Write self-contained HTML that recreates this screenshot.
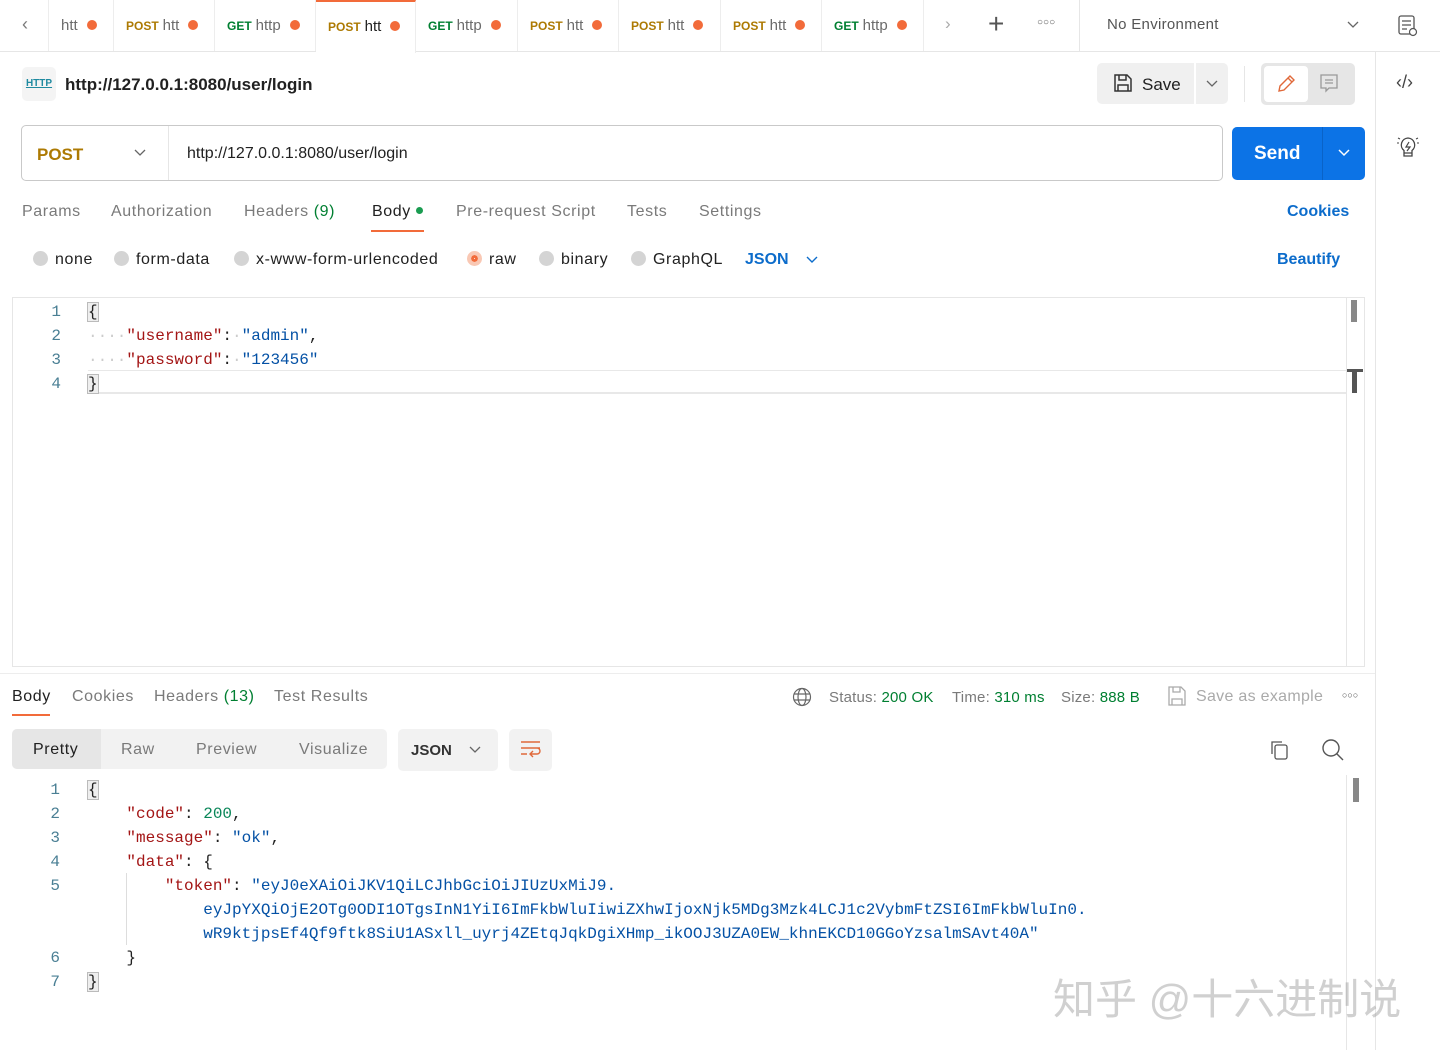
<!DOCTYPE html>
<html><head><meta charset="utf-8"><style>
*{box-sizing:border-box;margin:0;padding:0}
body{width:1440px;height:1050px;background:#fff;font-family:"Liberation Sans",sans-serif;color:#212121;position:relative;overflow:hidden;font-size:16px}
.a{position:absolute;white-space:nowrap}
.g{color:#7a7a7a}
.ls{letter-spacing:0.6px}
.mono{font-family:"Liberation Mono",monospace;font-size:16px}
.tab{position:absolute;top:0;height:51px;border-right:1px solid #ededed;font-size:15px;line-height:51px;padding-left:12px;color:#6b6b6b}
.tab b{font-size:12px;font-weight:bold;margin-right:4px}
.po{color:#ad7a03}.ge{color:#007f31}
.dot{display:inline-block;width:10px;height:10px;border-radius:50%;background:#f26b3a;margin-left:9px;vertical-align:0px}
.ln{color:#4a7f94;text-align:right;width:20px}
.k{color:#a31515}.s{color:#0451a5}.n{color:#098658}
.radio{display:inline-block;width:15px;height:15px;border-radius:50%;background:#d4d4d4;vertical-align:-2px;margin-right:7px}
</style></head><body>
<div class="a" style="left:0;top:0;width:1440px;height:52px;border-bottom:1px solid #e6e6e6"></div>
<div class="a g" style="left:22px;top:14px;font-size:18px">‹</div>
<div class="tab" style="left:48px;width:66px;border-left:1px solid #ededed">htt<span class="dot"></span></div>
<div class="tab" style="left:114px;width:101px"><b class="po">POST</b>htt<span class="dot"></span></div>
<div class="tab" style="left:215px;width:101px"><b class="ge">GET</b>http<span class="dot"></span></div>
<div class="tab" style="left:316px;width:100px;border-top:2px solid #f26b3a;line-height:49px;height:53px;background:#fff;color:#212121"><b class="po">POST</b>htt<span class="dot"></span></div>
<div class="tab" style="left:416px;width:102px"><b class="ge">GET</b>http<span class="dot"></span></div>
<div class="tab" style="left:518px;width:101px"><b class="po">POST</b>htt<span class="dot"></span></div>
<div class="tab" style="left:619px;width:102px"><b class="po">POST</b>htt<span class="dot"></span></div>
<div class="tab" style="left:721px;width:101px"><b class="po">POST</b>htt<span class="dot"></span></div>
<div class="tab" style="left:822px;width:102px"><b class="ge">GET</b>http<span class="dot"></span></div>
<div class="a g" style="left:945px;top:14px;font-size:17px;color:#aaa">›</div>
<div class="a" style="left:988px;top:8px;font-size:28px;font-weight:200;color:#555">+</div>
<div class="a" style="left:1037px;top:17px;font-size:10px;color:#555">○○○</div>
<div class="a" style="left:1079px;top:0;width:1px;height:51px;background:#e6e6e6"></div>
<div class="a" style="left:1107px;top:16px;font-size:15px;color:#555;letter-spacing:0.3px">No Environment</div>
<svg class="a" style="left:1346px;top:18px" width="14" height="14"><path d="M2 4l5 5 5-5" fill="none" stroke="#666" stroke-width="1.3"/></svg>
<svg class="a" style="left:1397px;top:14px" width="22" height="24"><rect x="2" y="2" width="15" height="18" rx="2" fill="none" stroke="#555" stroke-width="1.3"/><path d="M5 7h9M5 11h9M5 15h5" stroke="#555" stroke-width="1.2"/><circle cx="16" cy="18" r="3.5" fill="#fff" stroke="#555" stroke-width="1.2"/></svg>
<div class="a" style="left:1375px;top:52px;width:1px;height:998px;background:#e6e6e6"></div>
<div class="a" style="left:1396px;top:72px;font-size:18px;color:#444">‹/›</div>
<svg class="a" style="left:1396px;top:135px" width="24" height="26"><path d="M8 18v3h8v-3M12 3a7 7 0 0 0-4 12.5V18h8v-2.5A7 7 0 0 0 12 3z" fill="none" stroke="#444" stroke-width="1.3"/><path d="M13 7l-3 5h4l-3 4" fill="none" stroke="#444" stroke-width="1.2"/><path d="M1 8h2M21 8h2M2 3l2 1M22 3l-2 1" stroke="#444"/></svg>
<div class="a" style="left:22px;top:67px;width:34px;height:34px;border-radius:5px;background:#f4f4f4;color:#1f8aa0;font-size:10px;text-align:center;line-height:34px;font-weight:bold;text-decoration:underline">HTTP</div>
<div class="a" style="left:65px;top:75px;font-size:17px;font-weight:bold;color:#212121">http://127.0.0.1:8080/user/login</div>
<div class="a" style="left:1097px;top:63px;width:97px;height:41px;background:#f0f0f0;border-radius:5px 0 0 5px"></div>
<svg class="a" style="left:1113px;top:73px" width="20" height="20"><path d="M2 2h12l4 4v12H2z" fill="none" stroke="#333" stroke-width="1.5"/><path d="M6 2v5h7V2M5 18v-6h10v6" fill="none" stroke="#333" stroke-width="1.5"/></svg>
<div class="a" style="left:1142px;top:75px;font-size:17px">Save</div>
<div class="a" style="left:1196px;top:63px;width:32px;height:41px;background:#f0f0f0;border-radius:0 5px 5px 0"></div>
<svg class="a" style="left:1205px;top:77px" width="14" height="14"><path d="M2 4l5 5 5-5" fill="none" stroke="#666" stroke-width="1.3"/></svg>
<div class="a" style="left:1244px;top:66px;width:1px;height:36px;background:#e6e6e6"></div>
<div class="a" style="left:1261px;top:63px;width:94px;height:42px;background:#e6e6e6;border-radius:5px"></div>
<div class="a" style="left:1264px;top:66px;width:44px;height:36px;background:#fff;border-radius:4px"></div>
<svg class="a" style="left:1275px;top:73px" width="22" height="22"><path d="M4 18l1-5L15 3l4 4L9 17z M13 5l4 4" fill="none" stroke="#e0693a" stroke-width="1.4"/></svg>
<svg class="a" style="left:1319px;top:73px" width="22" height="22"><path d="M2 2h16v13H10l-3 3v-3H2z M6 7h8M6 10h8" fill="none" stroke="#999" stroke-width="1.3"/></svg>
<div class="a" style="left:21px;top:125px;width:1202px;height:56px;border:1px solid #c9c9c9;border-radius:5px"></div>
<div class="a" style="left:168px;top:126px;width:1px;height:54px;background:#e6e6e6"></div>
<div class="a" style="left:37px;top:145px;font-size:17px;font-weight:bold;color:#ad7a03">POST</div>
<svg class="a" style="left:133px;top:146px" width="14" height="14"><path d="M2 4l5 5 5-5" fill="none" stroke="#666" stroke-width="1.3"/></svg>
<div class="a" style="left:187px;top:145px;font-size:16px">http://127.0.0.1:8080/user/login</div>
<div class="a" style="left:1232px;top:127px;width:133px;height:53px;background:#0c73e6;border-radius:5px"></div>
<div class="a" style="left:1322px;top:127px;width:1px;height:53px;background:#0a63c8"></div>
<div class="a" style="left:1254px;top:143px;font-size:19px;font-weight:bold;color:#fff">Send</div>
<svg class="a" style="left:1337px;top:146px" width="14" height="14"><path d="M2 4l5 5 5-5" fill="none" stroke="#fff" stroke-width="1.5"/></svg>
<div class="a g ls" style="left:22px;top:203px">Params</div>
<div class="a g ls" style="left:111px;top:203px">Authorization</div>
<div class="a g ls" style="left:244px;top:203px">Headers <span style="color:#007f31">(9)</span></div>
<div class="a ls" style="left:372px;top:203px">Body <span style="display:inline-block;width:7px;height:7px;border-radius:50%;background:#1a9c51;vertical-align:2px"></span></div>
<div class="a" style="left:371px;top:230px;width:53px;height:2px;background:#f26b3a"></div>
<div class="a g ls" style="left:456px;top:203px">Pre-request Script</div>
<div class="a g ls" style="left:627px;top:203px">Tests</div>
<div class="a g ls" style="left:699px;top:203px">Settings</div>
<div class="a" style="left:1287px;top:203px;font-weight:bold;color:#0c6ccb">Cookies</div>
<div class="a ls" style="left:33px;top:251px"><span class="radio"></span>none</div>
<div class="a ls" style="left:114px;top:251px"><span class="radio"></span>form-data</div>
<div class="a ls" style="left:234px;top:251px"><span class="radio"></span>x-www-form-urlencoded</div>
<div class="a ls" style="left:467px;top:251px"><span class="radio" style="background:#fff;border:4px solid #f9c8b4;box-shadow:inset 0 0 0 3px #f26b3a"></span>raw</div>
<div class="a ls" style="left:539px;top:251px"><span class="radio"></span>binary</div>
<div class="a ls" style="left:631px;top:251px"><span class="radio"></span>GraphQL</div>
<div class="a" style="left:745px;top:251px;font-weight:bold;color:#0c6ccb">JSON</div>
<svg class="a" style="left:805px;top:253px" width="14" height="14"><path d="M2 4l5 5 5-5" fill="none" stroke="#0c6ccb" stroke-width="1.4"/></svg>
<div class="a" style="left:1277px;top:251px;font-weight:bold;color:#0c6ccb">Beautify</div>
<div class="a" style="left:12px;top:297px;width:1353px;height:370px;border:1px solid #e6e6e6"></div>
<div class="a" style="left:88px;top:370px;width:1258px;height:24px;border-top:1px solid #e8e8e8;border-bottom:2px solid #e8e8e8"></div>
<div class="a" style="left:1346px;top:298px;width:1px;height:368px;background:#e6e6e6"></div>
<div class="a" style="left:1351px;top:300px;width:6px;height:22px;background:#888"></div>
<div class="a" style="left:1347px;top:369px;width:16px;height:3px;background:#555"></div>
<div class="a" style="left:1352px;top:371px;width:5px;height:22px;background:#555"></div>
<div class="a mono" style="left:0;top:300px;line-height:24px">
<div style="position:absolute;left:41px;top:0" class="ln">1<br>2<br>3<br>4</div>
<div style="position:absolute;left:88px;top:0"><span style="outline:1px solid #bbb;background:#eee">{</span><br><span style="color:#ccc">····</span><span class="k">"username"</span>:<span style="color:#ccc">·</span><span class="s">"admin"</span>,<br><span style="color:#ccc">····</span><span class="k">"password"</span>:<span style="color:#ccc">·</span><span class="s">"123456"</span><br><span style="outline:1px solid #bbb;background:#eee">}</span></div>
</div>
<div class="a" style="left:0;top:673px;width:1375px;height:1px;background:#ededed"></div>
<div class="a ls" style="left:12px;top:688px">Body</div>
<div class="a" style="left:12px;top:714px;width:38px;height:2px;background:#f26b3a"></div>
<div class="a g ls" style="left:72px;top:688px">Cookies</div>
<div class="a g ls" style="left:154px;top:688px">Headers <span style="color:#007f31">(13)</span></div>
<div class="a g ls" style="left:274px;top:688px">Test Results</div>
<svg class="a" style="left:792px;top:687px" width="20" height="20"><circle cx="10" cy="10" r="8.5" fill="none" stroke="#666" stroke-width="1.2"/><ellipse cx="10" cy="10" rx="4" ry="8.5" fill="none" stroke="#666" stroke-width="1.2"/><path d="M2 7h16M2 13h16" stroke="#666" stroke-width="1.2"/></svg>
<div class="a g" style="left:829px;top:689px;font-size:15px;letter-spacing:0.2px">Status: <span style="color:#007f31">200 OK</span></div>
<div class="a g" style="left:952px;top:689px;font-size:15px;letter-spacing:0.2px">Time: <span style="color:#007f31">310 ms</span></div>
<div class="a g" style="left:1061px;top:689px;font-size:15px;letter-spacing:0.2px">Size: <span style="color:#007f31">888 B</span></div>
<svg class="a" style="left:1167px;top:685px" width="20" height="22"><path d="M2 2h12l4 4v14H2z M6 2v5h7V2M5 20v-6h10v6" fill="none" stroke="#aaa" stroke-width="1.3"/></svg>
<div class="a" style="left:1196px;top:688px;color:#aaa;letter-spacing:0.3px">Save as example</div>
<div class="a" style="left:1342px;top:690px;font-size:9px;color:#444">○○○</div>
<div class="a" style="left:12px;top:729px;width:375px;height:40px;background:#f2f2f2;border-radius:5px"></div>
<div class="a" style="left:12px;top:729px;width:89px;height:40px;background:#e6e6e6;border-radius:5px 0 0 5px"></div>
<div class="a ls" style="left:33px;top:741px">Pretty</div>
<div class="a g ls" style="left:121px;top:741px">Raw</div>
<div class="a g ls" style="left:196px;top:741px">Preview</div>
<div class="a g ls" style="left:299px;top:741px">Visualize</div>
<div class="a" style="left:398px;top:729px;width:100px;height:42px;background:#f2f2f2;border-radius:5px"></div>
<div class="a" style="left:411px;top:742px;font-size:15px;font-weight:bold;color:#333">JSON</div>
<svg class="a" style="left:468px;top:743px" width="14" height="14"><path d="M2 4l5 5 5-5" fill="none" stroke="#666" stroke-width="1.3"/></svg>
<div class="a" style="left:509px;top:729px;width:43px;height:42px;background:#f2f2f2;border-radius:5px"></div>
<svg class="a" style="left:519px;top:739px" width="24" height="22"><path d="M2 3h19M2 9h19M12 15h6a3 3 0 0 0 0-6 M14 12l-3 3 3 3M2 15h6" fill="none" stroke="#e0693a" stroke-width="1.4"/></svg>
<svg class="a" style="left:1268px;top:738px" width="24" height="24"><rect x="7" y="7" width="12" height="14" rx="2" fill="none" stroke="#555" stroke-width="1.3"/><path d="M4 16V4h10" fill="none" stroke="#555" stroke-width="1.3"/></svg>
<svg class="a" style="left:1321px;top:738px" width="24" height="24"><circle cx="10" cy="10" r="8" fill="none" stroke="#555" stroke-width="1.4"/><path d="M16 16l6 6" stroke="#555" stroke-width="1.4"/></svg>
<div class="a" style="left:1346px;top:775px;width:1px;height:275px;background:#e6e6e6"></div>
<div class="a" style="left:1353px;top:778px;width:6px;height:24px;background:#888"></div>
<div class="a" style="left:126px;top:873px;width:1px;height:72px;background:#ddd"></div>
<div class="a mono" style="left:0;top:778px;line-height:24px">
<div style="position:absolute;left:40px;top:0" class="ln">1<br>2<br>3<br>4<br>5<br><br><br>6<br>7</div>
<div style="position:absolute;left:88px;top:0;white-space:pre"><span style="outline:1px solid #bbb;background:#eee">{</span>
    <span class="k">"code"</span>: <span class="n">200</span>,
    <span class="k">"message"</span>: <span class="s">"ok"</span>,
    <span class="k">"data"</span>: {
        <span class="k">"token"</span>: <span class="s">"eyJ0eXAiOiJKV1QiLCJhbGciOiJIUzUxMiJ9.</span>
<span class="s">            eyJpYXQiOjE2OTg0ODI1OTgsInN1YiI6ImFkbWluIiwiZXhwIjoxNjk5MDg3Mzk4LCJ1c2VybmFtZSI6ImFkbWluIn0.</span>
<span class="s">            wR9ktjpsEf4Qf9ftk8SiU1ASxll_uyrj4ZEtqJqkDgiXHmp_ikOOJ3UZA0EW_khnEKCD10GGoYzsalmSAvt40A"</span>
    }
<span style="outline:1px solid #bbb;background:#eee">}</span></div>
</div>
<div class="a" style="left:1053px;top:966px;font-size:42px;color:rgba(150,150,150,0.45);font-family:'Liberation Sans','Noto Sans CJK SC',sans-serif">知乎 @十六进制说</div>
</body></html>
